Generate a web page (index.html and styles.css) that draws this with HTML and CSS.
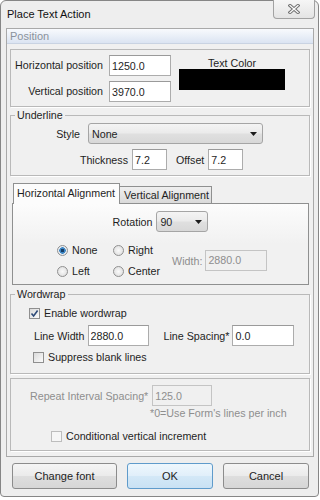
FILE: index.html
```html
<!DOCTYPE html>
<html lang="en">
<head>
    <meta charset="UTF-8">
    <title>Place Text Action</title>
    <link rel="stylesheet" href="styles.css">
</head>
<body>
    <div class="window">
        <div class="titlebar">
            Place Text Action
            <span class="close">
                <svg width="12" height="10" viewBox="0 0 12 10">
                    <path d="M2 1.5 L10 8.5 M10 1.5 L2 8.5" stroke="#6f6f6f" stroke-width="3.2" stroke-linecap="square"/>
                    <path d="M2 1.5 L10 8.5 M10 1.5 L2 8.5" stroke="#fafafa" stroke-width="1.3" stroke-linecap="square"/>
                </svg>
            </span>
        </div>

        <div class="panel">
            <div class="panel-head">Position</div>

            <div class="box pos-grid">
                <span class="pos-label">Horizontal position</span>
                <input class="field pos-field" type="text" value="1250.0">
                <div class="color-cell">
                    <span class="color-title">Text Color</span>
                    <span class="swatch"></span>
                </div>
                <span class="pos-label">Vertical position</span>
                <input class="field pos-field" type="text" value="3970.0">
            </div>

            <fieldset class="group">
                <legend>Underline</legend>
                <div class="row style-row">
                    <span class="style-label">Style</span>
                    <div class="combo combo-style">
                        <span>None</span>
                        <svg class="arrow" width="7" height="4" viewBox="0 0 7 4"><path d="M0 0 H7 L3.5 4 Z" fill="#1c1c1c"/></svg>
                    </div>
                </div>
                <div class="row thick-row">
                    <span class="thick-label">Thickness</span>
                    <input class="field small-field" type="text" value="7.2">
                    <span class="offset-label">Offset</span>
                    <input class="field small-field" type="text" value="7.2">
                </div>
            </fieldset>

            <div class="tabs">
                <div class="tab-strip">
                    <span class="tab active">Horizontal Alignment</span>
                    <span class="tab">Vertical Alignment</span>
                </div>
                <div class="tab-body">
                    <div class="rot-row">
                        <span>Rotation</span>
                        <div class="combo combo-rot">
                            <span>90</span>
                            <svg class="arrow" width="7" height="4" viewBox="0 0 7 4"><path d="M0 0 H7 L3.5 4 Z" fill="#1c1c1c"/></svg>
                        </div>
                    </div>
                    <div class="align-row">
                        <div class="radios">
                            <span class="choice"><span class="radio on"></span>None</span>
                            <span class="choice"><span class="radio"></span>Right</span>
                            <span class="choice"><span class="radio"></span>Left</span>
                            <span class="choice"><span class="radio"></span>Center</span>
                        </div>
                        <span class="dim width-label">Width:</span>
                        <input class="field width-field" type="text" value="2880.0" disabled>
                    </div>
                </div>
            </div>

            <fieldset class="group wrap-group">
                <legend>Wordwrap</legend>
                <div class="choice enable-row">
                    <span class="check">
                        <svg width="9" height="9" viewBox="0 0 9 9"><path d="M1.5 4.5 L3.6 7 L7.6 1.6" fill="none" stroke="#2d4a78" stroke-width="1.6"/></svg>
                    </span>
                    Enable wordwrap
                </div>
                <div class="row lw-row">
                    <span class="lw-label">Line Width</span>
                    <input class="field lw-field" type="text" value="2880.0">
                    <span class="ls-label">Line Spacing*</span>
                    <input class="field ls-field" type="text" value="0.0">
                </div>
                <div class="choice suppress-row">
                    <span class="check"></span>
                    Suppress blank lines
                </div>
            </fieldset>

            <div class="box misc">
                <div class="row repeat-row">
                    <span class="dim">Repeat Interval Spacing*</span>
                    <input class="field repeat-field" type="text" value="125.0" disabled>
                </div>
                <div class="dim note">*0=Use Form's lines per inch</div>
                <div class="choice cond-row">
                    <span class="check pale"></span>
                    Conditional vertical increment
                </div>
            </div>
        </div>

        <div class="buttons">
            <button class="btn btn-font">Change font</button>
            <button class="btn btn-ok">OK</button>
            <button class="btn">Cancel</button>
        </div>
    </div>
</body>
</html>
```

FILE: styles.css
```css
body {
    margin: 0;
    background: #fff;
    font-family: "Liberation Sans", Arial, sans-serif;
    font-size: 10.7px;
    color: #1e1e1e;
}
.window {
    position: relative;
    box-sizing: border-box;
    width: 319px;
    height: 497px;
    border: 1px solid #868686;
    border-radius: 6px 6px 4px 4px;
    background: #eeeeee;
}
.titlebar {
    height: 27px;
    line-height: 27px;
    padding-left: 6px;
    font-size: 11px;
    color: #111;
}
.close {
    position: absolute;
    top: -1px;
    right: 3px;
    box-sizing: border-box;
    width: 42px;
    height: 19px;
    border: 1px solid #a2a2a2;
    border-top: none;
    border-radius: 0 0 4px 4px;
    background: linear-gradient(#f6f6f6, #e4e4e4);
    display: flex;
    align-items: center;
    justify-content: center;
}
.panel {
    box-sizing: border-box;
    width: 308px;
    margin-left: 5px;
    border: 1px solid #a9a9a9;
    background: #f0f0f0;
    padding-bottom: 5px;
}
.panel-head {
    height: 14px;
    line-height: 14px;
    padding-left: 3px;
    border-bottom: 1px solid #c9d3e2;
    background: linear-gradient(#f8fafd, #dbe4f2);
    color: #8a929c;
    font-size: 11px;
}
.box {
    margin: 5px 3px 0 3px;
    border: 1px solid #b9b9b9;
    box-shadow: 1px 1px 0 #fff;
}
.pos-grid {
    display: grid;
    grid-template-columns: 98px 70px 106px;
    grid-template-rows: 21px 21px;
    row-gap: 5px;
    padding: 5px 0 4px;
}
.pos-label {
    grid-column: 1;
    text-align: right;
    white-space: nowrap;
    padding-right: 6px;
    line-height: 21px;
}
.field {
    box-sizing: border-box;
    height: 21px;
    margin: 0;
    padding: 0 2px;
    border: 1px solid #acacac;
    border-top-color: #9a9a9a;
    background: #fff;
    font: inherit;
    color: #1e1e1e;
}
.field:disabled {
    background: #f0f0f0;
    border-color: #c4c4c4;
    color: #8e8e8e;
}
.pos-field {
    grid-column: 2;
    width: 62px;
}
.color-cell {
    grid-column: 3;
    grid-row: 1 / span 2;
    display: flex;
    flex-direction: column;
    align-items: center;
}
.color-title {
    margin-top: 2px;
    line-height: 12px;
}
.swatch {
    width: 106px;
    height: 21px;
    background: #000;
}
.group {
    margin: 2px 3px 0 3px;
    padding: 2px 0 5px;
    min-width: 0;
    border: 1px solid #b9b9b9;
    box-shadow: 1px 1px 0 #fff;
}
.group legend {
    margin-left: 4px;
    padding: 0 2px;
    line-height: 12px;
}
.row {
    display: flex;
    align-items: center;
    white-space: nowrap;
}
.style-label {
    width: 69px;
    text-align: right;
}
.combo {
    box-sizing: border-box;
    height: 21px;
    display: flex;
    align-items: center;
    justify-content: space-between;
    padding: 0 5px 0 3px;
    border: 1px solid #a5a5a5;
    border-radius: 3px;
    background: linear-gradient(#f4f4f4, #ebebeb 45%, #dfdfdf 55%, #d8d8d8);
}
.combo-style {
    width: 175px;
    margin-left: 8px;
}
.thick-row {
    margin-top: 5px;
}
.thick-label {
    width: 117px;
    text-align: right;
}
.small-field {
    width: 35px;
    margin-left: 4px;
}
.offset-label {
    margin-left: 9px;
}
.tabs {
    margin: 7px 4px 0 5px;
}
.tab-strip {
    display: flex;
    align-items: flex-end;
    height: 20px;
    padding-left: 1px;
}
.tab {
    box-sizing: border-box;
    height: 17px;
    line-height: 16px;
    margin-left: -1px;
    padding: 0 2px 0 4px;
    border: 1px solid #8f9090;
    border-bottom: none;
    background: linear-gradient(#efefef, #dadada);
}
.tab.active {
    position: relative;
    z-index: 1;
    height: 21px;
    line-height: 19px;
    margin-left: 0;
    margin-bottom: -1px;
    padding: 0 4px 0 3px;
    background: #fcfcfc;
}
.tab-body {
    border: 1px solid #8f9090;
    background: linear-gradient(#fcfcfc, #f1f1f1 40px);
    padding: 7px 0 2px;
}
.rot-row {
    display: flex;
    align-items: center;
    justify-content: center;
    gap: 4px;
}
.combo-rot {
    width: 52px;
}
.align-row {
    display: flex;
    align-items: center;
    margin-top: 8px;
    padding-left: 44px;
}
.radios {
    display: grid;
    grid-template-columns: 56px auto;
    grid-auto-rows: 21px;
}
.choice {
    display: flex;
    align-items: center;
    gap: 4px;
    line-height: 15px;
}
.radio {
    box-sizing: border-box;
    width: 11px;
    height: 11px;
    border: 1px solid #909090;
    border-radius: 50%;
    background: radial-gradient(circle, #fafafa, #d9d9d9);
}
.radio.on {
    background: radial-gradient(circle, #163d66 0 1.5px, #3f87c4 2px 3px, #e8edf2 3.5px);
}
.dim {
    color: #8e8e8e;
}
.width-label {
    margin-left: 12px;
}
.width-field {
    width: 62px;
    margin-left: 3px;
    margin-bottom: 2px;
}
.wrap-group {
    margin-top: 3px;
    padding: 6px 0 8px;
}
.check {
    box-sizing: border-box;
    width: 11px;
    height: 11px;
    display: flex;
    align-items: center;
    justify-content: center;
    border: 1px solid #8f8f8f;
    background: linear-gradient(135deg, #dadada, #fbfbfb);
}
.check.pale {
    border-color: #bdbdbd;
    background: #f6f6f6;
}
.enable-row {
    margin-left: 18px;
}
.lw-row {
    margin-top: 4px;
}
.lw-label {
    margin-left: 23px;
}
.lw-field {
    width: 61px;
    margin-left: 3px;
}
.ls-label {
    margin-left: 15px;
}
.ls-field {
    width: 62px;
    margin-left: 3px;
}
.suppress-row {
    margin: 4px 0 0 22px;
}
.misc {
    margin-top: 4px;
    padding: 6px 0 6px;
}
.repeat-row {
    padding-left: 19px;
}
.repeat-field {
    width: 60px;
    margin-left: 4px;
}
.note {
    margin-left: 139px;
    margin-top: 1px;
    line-height: 13px;
}
.cond-row {
    margin: 9px 0 0 40px;
}
.buttons {
    display: flex;
    gap: 10px;
    margin-top: 6px;
    padding-left: 11px;
}
.btn {
    box-sizing: border-box;
    width: 86px;
    height: 26px;
    padding: 0;
    border: 1px solid #8c8c8c;
    border-radius: 3px;
    background: linear-gradient(#f5f5f5, #ebebeb 48%, #dedede 52%, #d6d6d6);
    font-family: inherit;
    font-size: 11px;
    color: #1e1e1e;
}
.btn-font {
    width: 105px;
}
.btn-ok {
    border-color: #5f9bcb;
    background: linear-gradient(#eef7fd, #e1effa 48%, #d3e8f7 52%, #c9e1f3);
}
```
